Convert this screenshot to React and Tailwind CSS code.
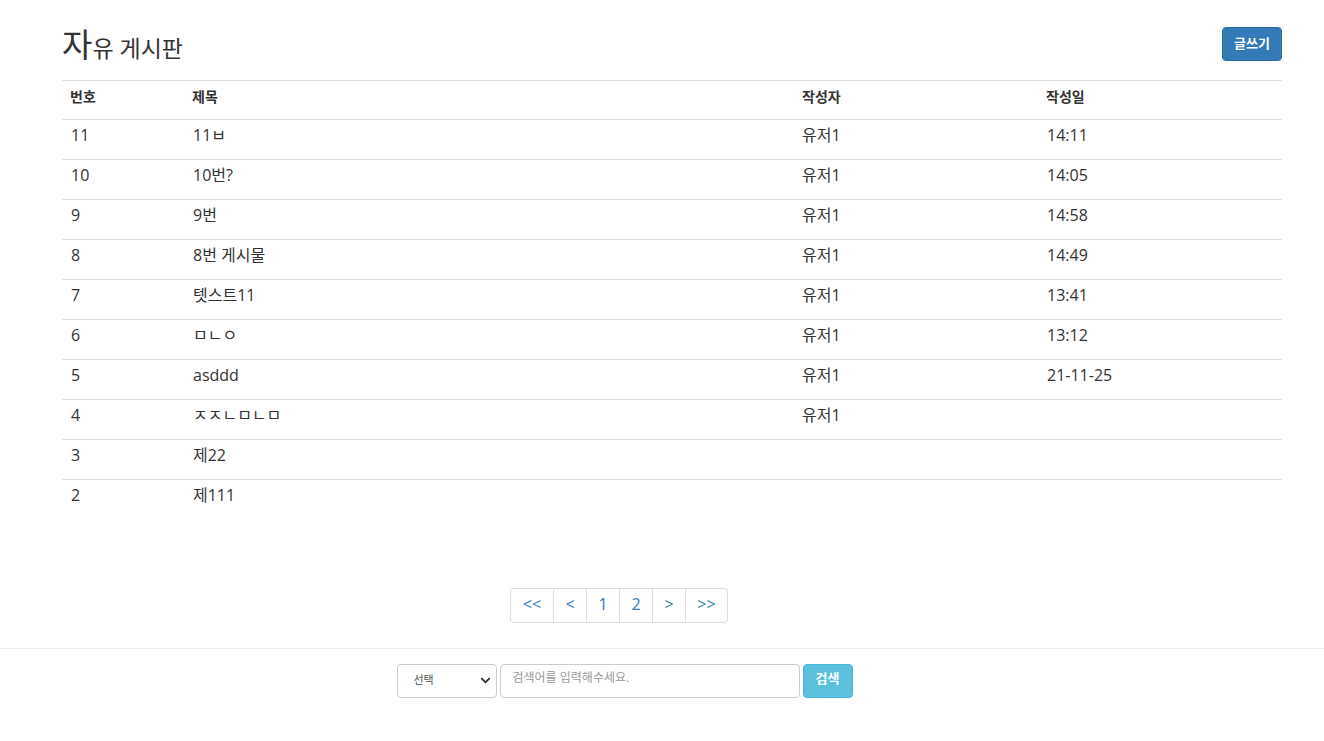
import { FaChevronDown } from 'react-icons/fa';

const posts = [
  { id: 11, title: '11ㅂ', writer: '유저1', date: '14:11' },
  { id: 10, title: '10번?', writer: '유저1', date: '14:05' },
  { id: 9, title: '9번', writer: '유저1', date: '14:58' },
  { id: 8, title: '8번 게시물', writer: '유저1', date: '14:49' },
  { id: 7, title: '텟스트11', writer: '유저1', date: '13:41' },
  { id: 6, title: 'ㅁㄴㅇ', writer: '유저1', date: '13:12' },
  { id: 5, title: 'asddd', writer: '유저1', date: '21-11-25' },
  { id: 4, title: 'ㅈㅈㄴㅁㄴㅁ', writer: '유저1', date: '' },
  { id: 3, title: '제22', writer: '', date: '' },
  { id: 2, title: '제111', writer: '', date: '' },
];

const pages = ['<<', '<', '1', '2', '>', '>>'];

const App = () => {
  return (
    <div
      className="min-h-screen bg-white text-[#333]"
      style={{ fontFamily: '"Open Sans", "Noto Sans CJK KR", sans-serif' }}
    >
      <div className="ml-[62px] mr-[42px]">
        <div className="flex h-[80px] items-end justify-between pb-[19px]">
          <h1 className="leading-none">
            <span className="text-[33px]">자</span>
            <span className="text-[23px]">유 게시판</span>
          </h1>
          <button className="h-[34px] w-[60px] rounded border border-[#2e6da4] bg-[#337ab7] text-[13px] font-bold text-white">
            글쓰기
          </button>
        </div>

        <table className="w-full table-fixed border-collapse">
          <colgroup>
            <col className="w-[10%]" />
            <col className="w-[50%]" />
            <col className="w-[20%]" />
            <col className="w-[20%]" />
          </colgroup>
          <thead>
            <tr className="h-[39px] border-t border-[#ddd] text-left text-[14px] font-bold">
              <th className="px-2 pb-[7px]">번호</th>
              <th className="px-2 pb-[7px]">제목</th>
              <th className="px-2 pb-[7px]">작성자</th>
              <th className="px-2 pb-[7px]">작성일</th>
            </tr>
          </thead>
          <tbody className="text-[16px]">
            {posts.map((p) => (
              <tr key={p.id} className="h-[40px] border-t border-[#ddd]">
                <td className="px-2 pb-[10px] pl-[9px]">{p.id}</td>
                <td className="px-2 pb-[10px] pl-[9px]">{p.title}</td>
                <td className="px-2 pb-[10px]">{p.writer}</td>
                <td className="px-2 pb-[10px] pl-[9px]">{p.date}</td>
              </tr>
            ))}
          </tbody>
        </table>
      </div>

      <div className="mt-[68px] flex justify-center pr-[86px]">
        <ul className="flex h-[35px] rounded border border-[#ddd] text-[16px] text-[#337ab7]">
          {pages.map((p, i) => (
            <li
              key={i}
              className={`flex items-center justify-center pb-[3px] ${i > 0 ? 'border-l border-[#ddd]' : ''} ${
                p.length === 2 ? 'w-[42px]' : 'w-[33px]'
              }`}
            >
              {p}
            </li>
          ))}
        </ul>
      </div>

      <div className="mt-[25px] border-t border-[#eee] pt-[15px]">
        <div className="flex justify-center gap-[3px] pr-[75px]">
          <div className="flex h-[34px] w-[100px] items-center justify-between rounded border border-[#ccc] pl-[16px] pr-[5px] text-[11px] text-[#555]">
            <span>선택</span>
            <FaChevronDown className="text-[11px] text-[#333]" />
          </div>
          <input
            className="h-[34px] w-[300px] rounded border border-[#ccc] px-[12px] pb-[6px] text-[12px] outline-none placeholder:text-[#999]"
            placeholder="검색어를 입력해수세요."
          />
          <button className="h-[34px] w-[50px] rounded border border-[#46b8da] bg-[#5bc0de] pb-[4px] text-[13px] font-bold text-white">
            검색
          </button>
        </div>
      </div>
    </div>
  );
};

export default App;
